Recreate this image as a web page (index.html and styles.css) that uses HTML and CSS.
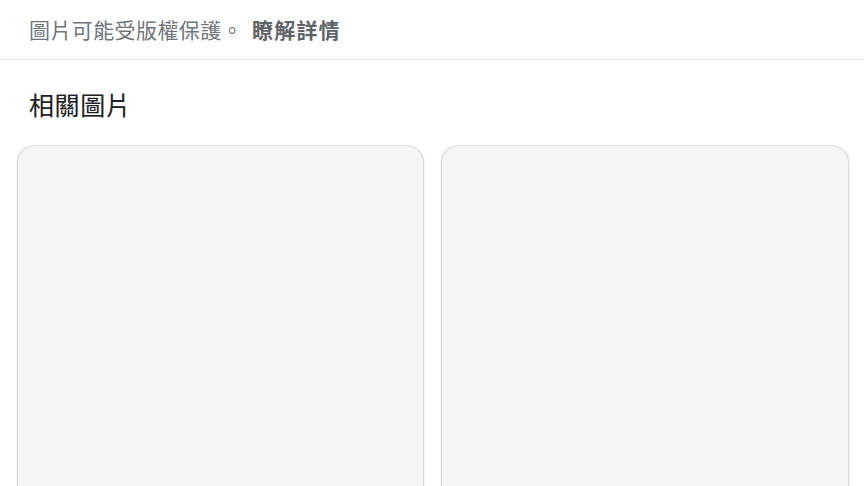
FILE: index.html
```html
<!DOCTYPE html>
<html lang="zh-Hant">
<head>
<meta charset="utf-8">
<link rel="stylesheet" href="styles.css">
</head>
<body>
<div class="notice">
  <span class="notice-text">圖片可能受版權保護。</span>
  <a class="notice-link">瞭解詳情</a>
</div>
<section class="related">
  <h2 class="related-title">相關圖片</h2>
  <div class="grid">
    <div class="card"></div>
    <div class="card"></div>
  </div>
</section>
</body>
</html>
```
FILE: styles.css
```css
html, body {
  margin: 0;
  padding: 0;
  background: #ffffff;
  font-family: "Noto Sans CJK TC", "Noto Sans", sans-serif;
  overflow: hidden;
  height: 486px;
}
.notice {
  height: 60px;
  box-sizing: border-box;
  border-bottom: 1px solid #e6e6e6;
  padding: 0 0 2px 29px;
  display: flex;
  align-items: center;
  font-size: 21px;
  letter-spacing: 0.4px;
  color: #70757a;
}
.notice-text {
  margin-right: 9px;
}
.notice-link {
  font-weight: 700;
  color: #5f6368;
  letter-spacing: 1.2px;
}
.related {
  padding: 0 16px 0 18px;
}
.related-title {
  margin: 0;
  padding: 26px 0 0 11px;
  font-size: 25px;
  font-weight: 400;
  letter-spacing: 0.6px;
  -webkit-text-stroke: 0.12px #202124;
  color: #202124;
  line-height: 36px;
  box-sizing: border-box;
  height: 86px;
}
.grid {
  display: grid;
  grid-template-columns: 405px 406px;
  column-gap: 19px;
}
.card {
  height: 400px;
  background: #f5f5f5;
  border-radius: 16px;
  box-shadow: -1px 0 2px rgba(0,0,0,0.16), 1px 0 2px rgba(0,0,0,0.16), 0 0 1px rgba(0,0,0,0.12);
}
```
